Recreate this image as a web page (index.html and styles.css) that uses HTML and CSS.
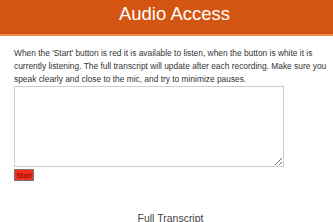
FILE: index.html
```html
<!DOCTYPE html>
<html>
	<head>
		<meta charset="utf-8">
		<title>Audio Access</title>
		<link rel="stylesheet" href="styles.css">
	</head>
	<body>
		<div class="header">
			<h1>Audio Access</h1>
		</div>

		<div class="content">
			<p class="instructions">When the 'Start' button is red it is available to listen, when the button is white it is currently listening. The full transcript will update after each recording. Make sure you speak clearly and close to the mic, and try to minimize pauses.</p>
			<textarea id="transcript" class="live"></textarea>
			<button id="start" class="start">Start</button>

			<h2>Full Transcript</h2>
		</div>
	</body>
</html>
```

FILE: styles.css
```css
body {
	margin: 0;
	font-family: "Liberation Sans", Arial, sans-serif;
	color: #333;
	background-color: #fff;
}

.header {
	background-color: #d35511;
	border-bottom: 2px solid #ec8a4e;
	height: 34px;
	padding-left: 16px;
	text-align: center;
}

h1 {
	margin: 0;
	padding-top: 3px;
	font-size: 18.5px;
	font-weight: normal;
	color: #fff;
}

.content {
	padding: 0 6px 0 14px;
}

.instructions {
	margin: 11px 0 0 0;
	font-size: 8.4px;
	line-height: 13px;
}

textarea {
	display: block;
	width: 270px;
	height: 81px;
	margin: 0;
	padding: 0;
	border: 1px solid #ccc;
	box-sizing: border-box;
	resize: both;
}

.start {
	display: block;
	margin-top: 2px;
	width: 20px;
	height: 12px;
	padding: 0;
	font-family: "Liberation Sans", Arial, sans-serif;
	font-size: 7.5px;
	background-color: #f52d1e;
	color: #7a0d08;
	border: 1px solid #777;
}

h2 {
	margin: 31px 0 0 0;
	text-align: center;
	font-size: 10.5px;
	font-weight: normal;
	color: #444;
}
```
